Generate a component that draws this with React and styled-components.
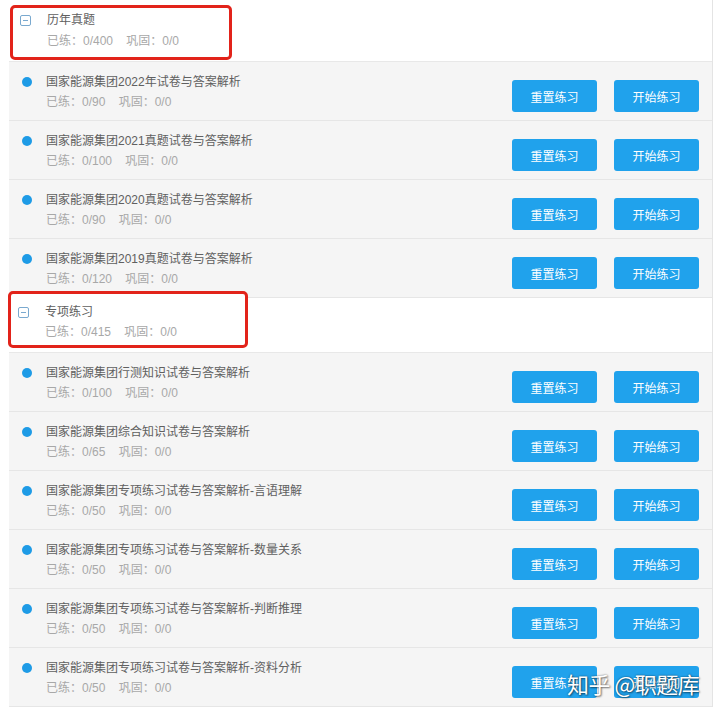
import React from 'react';
import styled, { createGlobalStyle } from 'styled-components';

const GlobalStyle = createGlobalStyle`
  html, body {
    margin: 0;
    padding: 0;
    background: #ffffff;
  }
  body {
    font-family: "Liberation Sans", "Noto Sans CJK SC", sans-serif;
    overflow: hidden;
  }
`;

const Page = styled.div`
  position: relative;
  width: 720px;
  height: 712px;
  overflow: hidden;
  background: #fff;
`;

const List = styled.div`
  margin: 0 7px 0 9px;
  border-right: 1px solid #e4e4e4;
`;

const Header = styled.div`
  height: ${(p) => p.$h}px;
  display: flex;
  align-items: flex-start;
  background: #fff;
  border-bottom: 1px solid #e8e8e8;
  box-sizing: border-box;
`;

const Marked = styled.div`
  width: ${(p) => p.$w}px;
  height: ${(p) => p.$bh}px;
  box-sizing: border-box;
  border: 3px solid #e2231a;
  border-radius: 5px;
  margin: ${(p) => p.$mt}px 0 0 ${(p) => p.$ml}px;
  background: #fff;
  display: flex;
  align-items: flex-start;
  padding: ${(p) => p.$pt}px 0 0 7px;
  flex: none;
`;

const Toggle = styled.span`
  width: 9px;
  height: 9px;
  margin-top: 4px;
  border: 1px solid #7aa9cf;
  border-radius: 2px;
  position: relative;
  flex: none;
  &::after {
    content: '';
    position: absolute;
    left: 2px;
    right: 2px;
    top: 4px;
    height: 1px;
    background: #7aa9cf;
  }
`;

const Texts = styled.div`
  margin-left: 16px;
  display: flex;
  flex-direction: column;
  gap: ${(p) => p.$gap}px;
`;

const Title = styled.div`
  font-size: 12px;
  line-height: 18px;
  color: #606060;
  white-space: nowrap;
`;

const Stats = styled.div`
  font-size: 12px;
  line-height: 18px;
  color: #a8a8a8;
  white-space: pre;
`;

const Row = styled.div`
  height: 59px;
  box-sizing: border-box;
  background: #f5f5f5;
  border-bottom: 1px solid #e6e6e6;
  display: flex;
  align-items: flex-start;
  padding: 11px 0 0 13px;
`;

const Dot = styled.span`
  width: 10px;
  height: 10px;
  border-radius: 50%;
  background: #1e9be6;
  margin-top: 4px;
  flex: none;
`;

const RowTexts = styled.div`
  margin-left: 14px;
  display: flex;
  flex-direction: column;
  gap: 2px;
  flex: 1;
`;

const Buttons = styled.div`
  display: flex;
  gap: 17px;
  margin: 7px 13px 0 0;
`;

const Button = styled.button`
  width: 85px;
  height: 32px;
  border: none;
  border-radius: 3px;
  background: #20a2ec;
  color: #fff;
  font-family: "Liberation Sans", "Noto Sans CJK SC", sans-serif;
  font-size: 12px;
  padding: 0;
  cursor: pointer;
`;

const Watermark = styled.div`
  position: absolute;
  left: 567px;
  top: 666px;
  font-family: "Noto Sans CJK SC", sans-serif;
  font-size: 22px;
  line-height: 34px;
  color: #fff;
  letter-spacing: -0.5px;
  text-shadow: 0 0 2px rgba(0, 0, 0, 0.55), 1px 1px 2px rgba(0, 0, 0, 0.45);
  white-space: pre;
`;

const sections = [
  {
    title: '历年真题',
    stats: '已练：0/400    巩固：0/0',
    box: { w: 222, bh: 55, ml: 1, mt: 5, pt: 3, gap: 3 },
    h: 62,
    items: [
      ['国家能源集团2022年试卷与答案解析', '0/90'],
      ['国家能源集团2021真题试卷与答案解析', '0/100'],
      ['国家能源集团2020真题试卷与答案解析', '0/90'],
      ['国家能源集团2019真题试卷与答案解析', '0/120'],
    ],
  },
  {
    title: '专项练习',
    stats: '已练：0/415    巩固：0/0',
    box: { w: 240, bh: 57, ml: -1, mt: -7, pt: 9, gap: 2 },
    h: 55,
    items: [
      ['国家能源集团行测知识试卷与答案解析', '0/100'],
      ['国家能源集团综合知识试卷与答案解析', '0/65'],
      ['国家能源集团专项练习试卷与答案解析-言语理解', '0/50'],
      ['国家能源集团专项练习试卷与答案解析-数量关系', '0/50'],
      ['国家能源集团专项练习试卷与答案解析-判断推理', '0/50'],
      ['国家能源集团专项练习试卷与答案解析-资料分析', '0/50'],
    ],
  },
];

export default function App() {
  return (
    <Page>
      <GlobalStyle />
      <List>
        {sections.map((s) => (
          <React.Fragment key={s.title}>
            <Header $h={s.h}>
              <Marked $w={s.box.w} $bh={s.box.bh} $ml={s.box.ml} $mt={s.box.mt} $pt={s.box.pt}>
                <Toggle />
                <Texts $gap={s.box.gap}>
                  <Title>{s.title}</Title>
                  <Stats>{s.stats}</Stats>
                </Texts>
              </Marked>
            </Header>
            {s.items.map(([name, done]) => (
              <Row key={name}>
                <Dot />
                <RowTexts>
                  <Title>{name}</Title>
                  <Stats>{`已练：${done}    巩固：0/0`}</Stats>
                </RowTexts>
                <Buttons>
                  <Button>重置练习</Button>
                  <Button>开始练习</Button>
                </Buttons>
              </Row>
            ))}
          </React.Fragment>
        ))}
      </List>
      <Watermark>知乎 @职题库</Watermark>
    </Page>
  );
}
